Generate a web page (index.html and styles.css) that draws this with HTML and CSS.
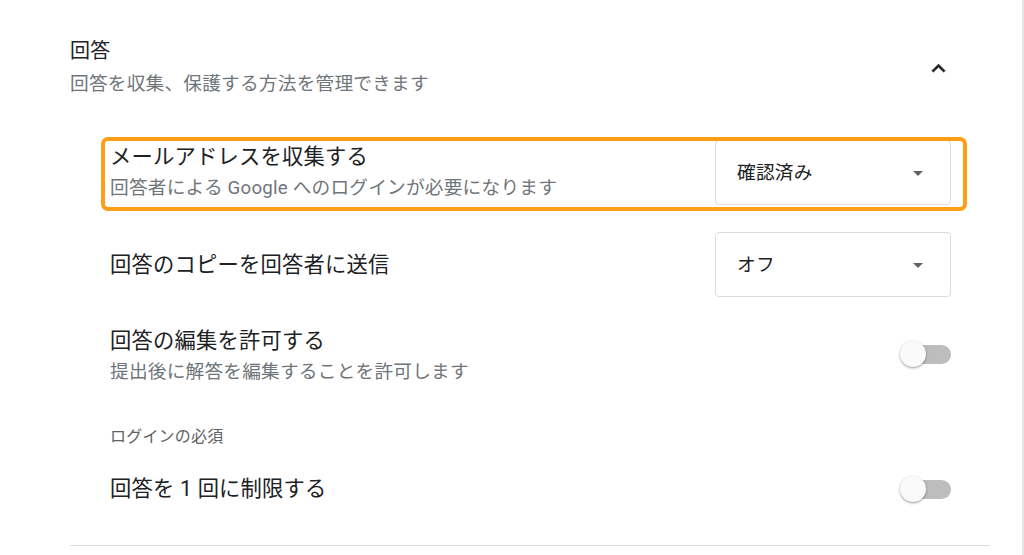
FILE: index.html
```html
<!DOCTYPE html>
<html lang="ja">
<head>
<meta charset="utf-8">
<title>回答</title>
<link rel="stylesheet" href="styles.css">
</head>
<body>
<div class="page">
  <section class="section">
    <div class="section-header">
      <div class="section-text">
        <div class="section-title">回答</div>
        <div class="section-sub">回答を収集、保護する方法を管理できます</div>
      </div>
      <svg class="chevron" viewBox="0 0 24 24" width="27" height="27"><path d="M12 8l-6 6 1.41 1.41L12 10.83l4.59 4.58L18 14z" fill="#202124" stroke="#202124" stroke-width="0.4"/></svg>
    </div>

    <div class="items">
      <div class="item item-highlighted">
        <div class="item-text">
          <div class="item-title">メールアドレスを収集する</div>
          <div class="item-sub">回答者による Google へのログインが必要になります</div>
        </div>
        <div class="select">
          <span class="select-value">確認済み</span>
          <svg class="caret" viewBox="0 0 24 24" width="24" height="24"><path d="M7 10l5 5 5-5z" fill="#5f6368"/></svg>
        </div>
        <div class="highlight"></div>
      </div>

      <div class="item item-copy">
        <div class="item-text">
          <div class="item-title">回答のコピーを回答者に送信</div>
        </div>
        <div class="select">
          <span class="select-value">オフ</span>
          <svg class="caret" viewBox="0 0 24 24" width="24" height="24"><path d="M7 10l5 5 5-5z" fill="#5f6368"/></svg>
        </div>
      </div>

      <div class="item item-edit">
        <div class="item-text">
          <div class="item-title">回答の編集を許可する</div>
          <div class="item-sub">提出後に解答を編集することを許可します</div>
        </div>
        <div class="toggle"><span class="track"></span><span class="thumb"></span></div>
      </div>

      <div class="group-label">ログインの必須</div>

      <div class="item item-limit">
        <div class="item-text">
          <div class="item-title">回答を 1 回に制限する</div>
        </div>
        <div class="toggle"><span class="track"></span><span class="thumb"></span></div>
      </div>
    </div>
  </section>
  <div class="divider"></div>
</div>
</body>
</html>
```

FILE: styles.css
```css
html, body {
  margin: 0;
  padding: 0;
  background: #ffffff;
}

body {
  font-family: Roboto, "Noto Sans CJK JP", "Noto Sans", sans-serif;
  color: #202124;
  letter-spacing: 0.2px;
}

.page {
  box-sizing: border-box;
  width: 1024px;
  height: 555px;
  border-right: 2px solid #e6e6e6;
  padding-top: 37px;
  overflow: hidden;
}

.section {
  margin-left: 70px;
  width: 920px;
  box-sizing: border-box;
  padding-right: 39px;
}

.section-header {
  display: flex;
  align-items: center;
  justify-content: space-between;
}

.section-text {
  display: flex;
  flex-direction: column;
  gap: 5px;
}

.section-title {
  font-size: 20px;
  line-height: 28px;
  color: #202124;
}

.section-sub {
  font-size: 18.7px;
  line-height: 28px;
  color: #70757a;
}

.chevron {
  display: block;
  margin-top: 1px;
  margin-right: -1px;
}

.items {
  padding-left: 40px;
  padding-top: 42px;
  display: flex;
  flex-direction: column;
}

.item {
  position: relative;
  display: flex;
  align-items: center;
  justify-content: space-between;
}

.item-text {
  display: flex;
  flex-direction: column;
  gap: 3px;
}

.item-title {
  font-size: 21.3px;
  line-height: 28px;
  color: #202124;
}

.item-sub {
  font-size: 18.7px;
  line-height: 28px;
  color: #70757a;
}

.select {
  box-sizing: border-box;
  width: 236px;
  height: 65px;
  border: 1px solid #dadce0;
  border-radius: 4px;
  display: flex;
  align-items: center;
  justify-content: space-between;
  padding-left: 21px;
  padding-right: 20px;
  background: #fff;
}

.select-value {
  font-size: 18.7px;
  line-height: 28px;
  color: #202124;
}

.caret {
  display: block;
}

.highlight {
  position: absolute;
  top: -3px;
  bottom: -6px;
  left: -9px;
  right: -16px;
  border: 4px solid #ff9e16;
  border-radius: 7px;
  pointer-events: none;
}

.item-copy {
  margin-top: 27px;
}

.item-edit {
  margin-top: 30px;
}

.group-label {
  margin-top: 40px;
  font-size: 16px;
  line-height: 22px;
  color: #5f6368;
}

.item-limit {
  margin-top: 27px;
}

.toggle {
  position: relative;
  width: 51px;
  height: 27px;
  flex: none;
}

.track {
  position: absolute;
  right: 0;
  top: 4px;
  width: 45px;
  height: 19px;
  border-radius: 10px;
  background: #bdbdbd;
}

.thumb {
  position: absolute;
  left: 0;
  top: 0;
  width: 26px;
  height: 26px;
  border-radius: 50%;
  background: #fafafa;
  box-shadow: 0 1px 3px rgba(0, 0, 0, 0.3), 0 1px 1px rgba(0, 0, 0, 0.12);
}

.item-edit .toggle {
  margin-top: -4px;
}

.divider {
  margin-left: 70px;
  margin-top: 42px;
  width: 920px;
  height: 1px;
  background: #dadce0;
}
```
